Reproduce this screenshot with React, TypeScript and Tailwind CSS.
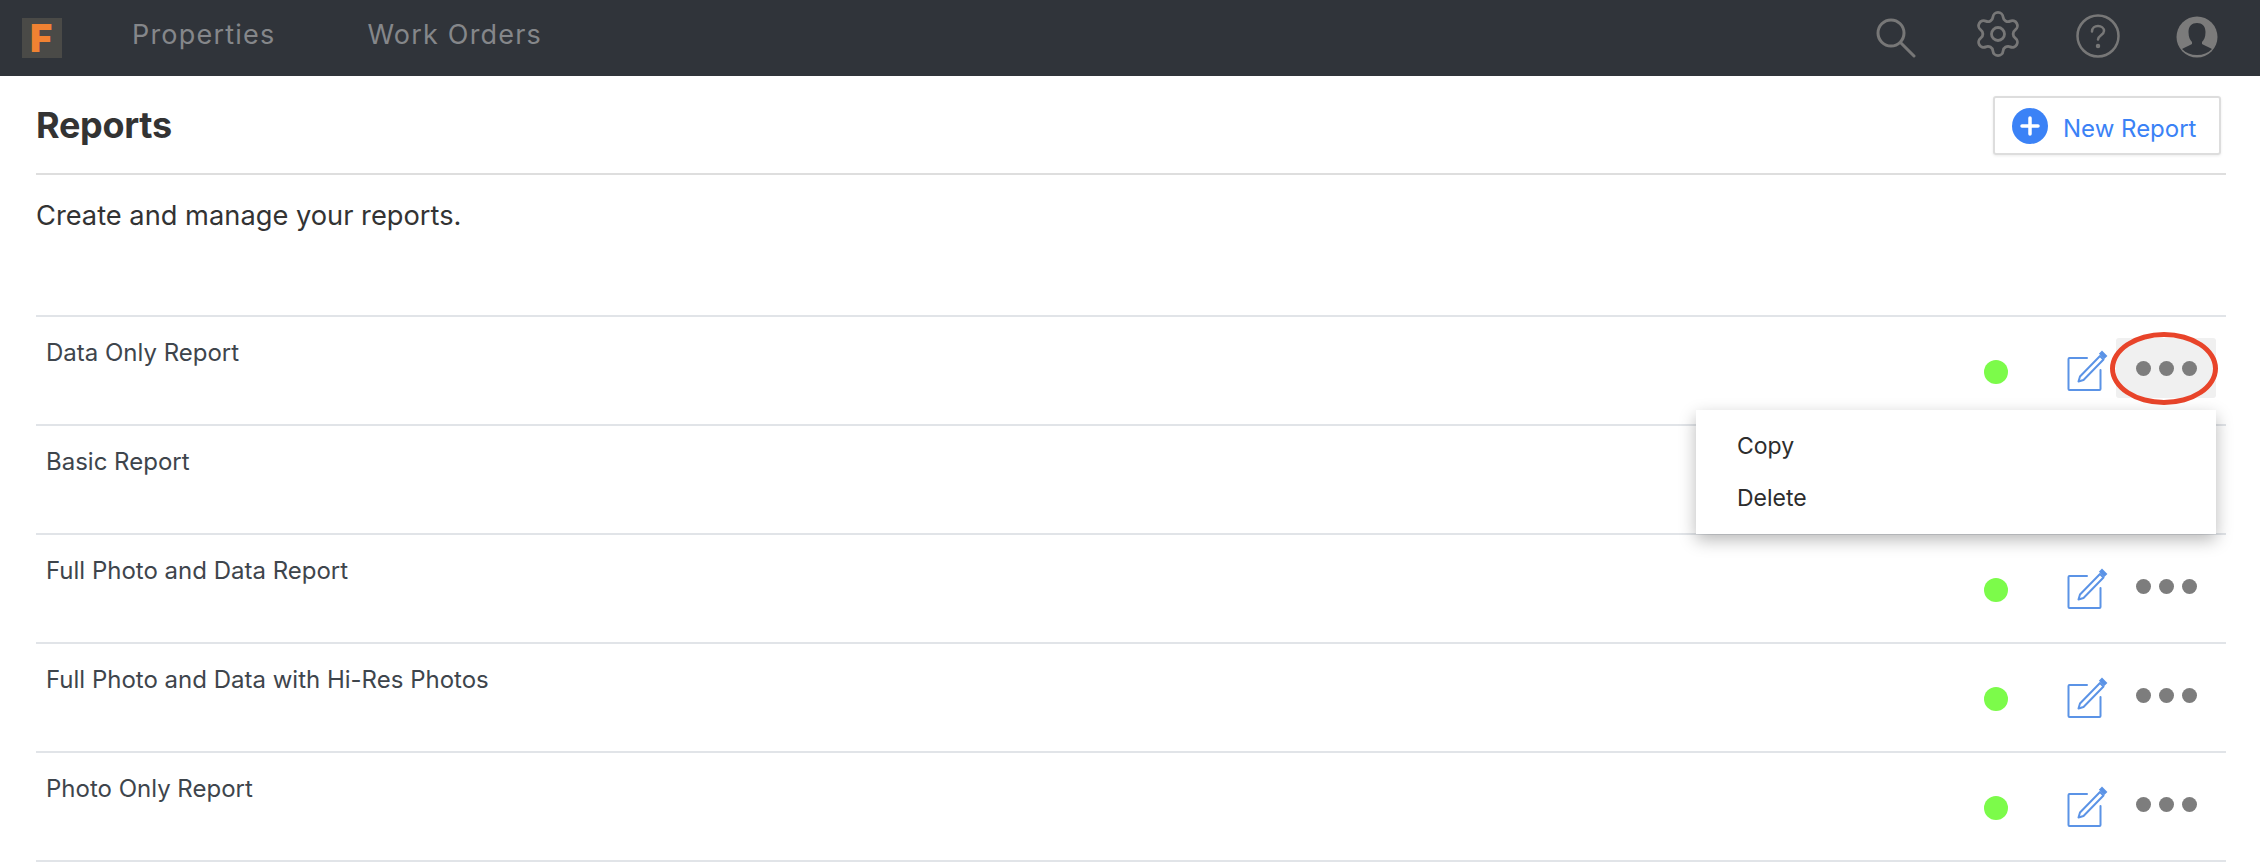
import React from 'react';
import { Settings } from 'lucide-react';

const reports = [
  'Data Only Report',
  'Basic Report',
  'Full Photo and Data Report',
  'Full Photo and Data with Hi-Res Photos',
  'Photo Only Report',
];

const EditIcon = () => (
  <svg width="44" height="44" viewBox="0 0 44 44" fill="none" stroke="#5b93e6" strokeWidth="2">
    <path d="M21 8H3.500a1 1 0 0 0-1 1v30a1 1 0 0 0 1 1h30a1 1 0 0 0 1-1V20" strokeLinecap="round" />
    <path d="M14 26.500 L34 6 L37.500 9.500 L17.500 30 L12.500 31.500 Z" strokeLinejoin="round" />
    <path d="M36 2 L40 6 L38.300 7.700 L34.300 3.700 Z" fill="#5b93e6" />
  </svg>
);

const Dots = () => (
  <div className="flex gap-[8px]">
    <span className="w-[15px] h-[15px] rounded-full bg-[#7d7d7d]" />
    <span className="w-[15px] h-[15px] rounded-full bg-[#7d7d7d]" />
    <span className="w-[15px] h-[15px] rounded-full bg-[#7d7d7d]" />
  </div>
);

const ReportRow = ({ name, first }: { name: string; first: boolean }) => (
  <div className="relative flex h-[109px] border-b-2 border-[#e1e4e8]">
    <div className="pl-[10px] pt-[21px] text-[24px] leading-[30px] text-[#3e454c]">{name}</div>
    <div className="ml-auto flex items-start">
      <span className="mt-[43px] w-[24px] h-[24px] rounded-full bg-[#7cfb4a]" />
      <div className="ml-[58px] mt-[33px]">
        <EditIcon />
      </div>
      <div className={`ml-[6px] mt-[21px] mr-[10px] w-[100px] h-[60px] flex items-center justify-center rounded-[3px] ${first ? 'bg-[#f0f0f0]' : ''}`}>
        <Dots />
      </div>
    </div>
    {first && (
      <>
        <div className="absolute right-[8px] top-[15px] w-[108px] h-[73px] rounded-[50%] border-[5px] border-[#e8442a]" />
        <div className="absolute z-10 left-[1660px] top-[93px] w-[520px] h-[124px] bg-white shadow-[0_6px_16px_rgba(0,0,0,0.28)] pt-[10px] pl-[41px] text-[23px] leading-[52px] text-[#2d2d2d]">
          <div>Copy</div>
          <div>Delete</div>
        </div>
      </>
    )}
  </div>
);

export default function App() {
  return (
    <div className="w-[2260px] h-[868px] overflow-hidden bg-white font-['Inter',sans-serif]">
      <header className="h-[76px] bg-[#30343a] flex items-center pl-[22px]">
        <div className="w-[40px] h-[40px] pr-[2px] bg-[#4a4a47] flex items-center justify-center text-[38px] leading-none font-black text-[#f08232]">F</div>
        <nav className="ml-[70px] pb-[6px] flex gap-[92px] text-[27px] tracking-[1.2px] text-[#85878a]">
          <span>Properties</span>
          <span>Work Orders</span>
        </nav>
        <div className="ml-auto flex items-center text-[#777777]">
          <svg width="40" height="40" viewBox="0 0 40 40" fill="none" stroke="currentColor" strokeWidth="3" strokeLinecap="round">
            <circle cx="15" cy="15" r="13" />
            <path d="M25 25 L38 38" />
          </svg>
          <Settings size={52} strokeWidth={1.3} className="ml-[56px] mb-[8px]" />
          <svg width="44" height="44" viewBox="0 0 44 44" fill="none" stroke="currentColor" strokeWidth="2.500" strokeLinecap="round" className="ml-[52px] mb-[4px]">
            <circle cx="22" cy="22" r="20.500" />
            <path d="M16 17.500c0-3.500 2.700-5.500 6-5.500s6 2 6 5c0 4-6 4.500-6 8.500" />
            <circle cx="22" cy="32" r="1" fill="currentColor" />
          </svg>
          <svg width="42" height="42" viewBox="0 0 42 42" className="ml-[56px] mr-[42px] mb-[3px]">
            <circle cx="21" cy="21" r="20.500" fill="#7b7b7b" />
            <path d="M6 33c3-2 7-3 10-5v-2c-2-2-3.500-5-3.500-10C12.500 10 16 7 21 7s8.500 3 8.500 9c0 5-1.500 8-3.500 10v2c3 2 7 3 10 5-4 4-9 6-15 6S10 37 6 33z" fill="#30343a" />
          </svg>
        </div>
      </header>
      <main className="pl-[36px] pr-[34px]">
        <div className="flex items-center justify-between h-[99px] border-b-2 border-[#dedede] pr-[5px]">
          <h1 className="text-[36px] font-bold text-[#333333] tracking-[-0.3px]">Reports</h1>
          <button className="mt-[2px] w-[228px] h-[59px] flex items-center pl-[17px] border-2 border-[#dddddd] rounded-[3px] shadow-[0_1px_3px_rgba(0,0,0,0.08)] text-[24px] text-[#3b82f6]">
            <svg width="36" height="36" viewBox="0 0 36 36">
              <circle cx="18" cy="18" r="18" fill="#3b82f6" />
              <path d="M18 10V26M10 18H26" stroke="#ffffff" strokeWidth="3.500" strokeLinecap="round" />
            </svg>
            <span className="ml-[15px] pt-[6px]">New Report</span>
          </button>
        </div>
        <p className="pt-[23px] h-[142px] border-b-2 border-[#e1e4e8] text-[27.250px] leading-[36px] text-[#333333]">Create and manage your reports.</p>
        {reports.map((name, i) => (
          <ReportRow key={name} name={name} first={i === 0} />
        ))}
      </main>
    </div>
  );
}
